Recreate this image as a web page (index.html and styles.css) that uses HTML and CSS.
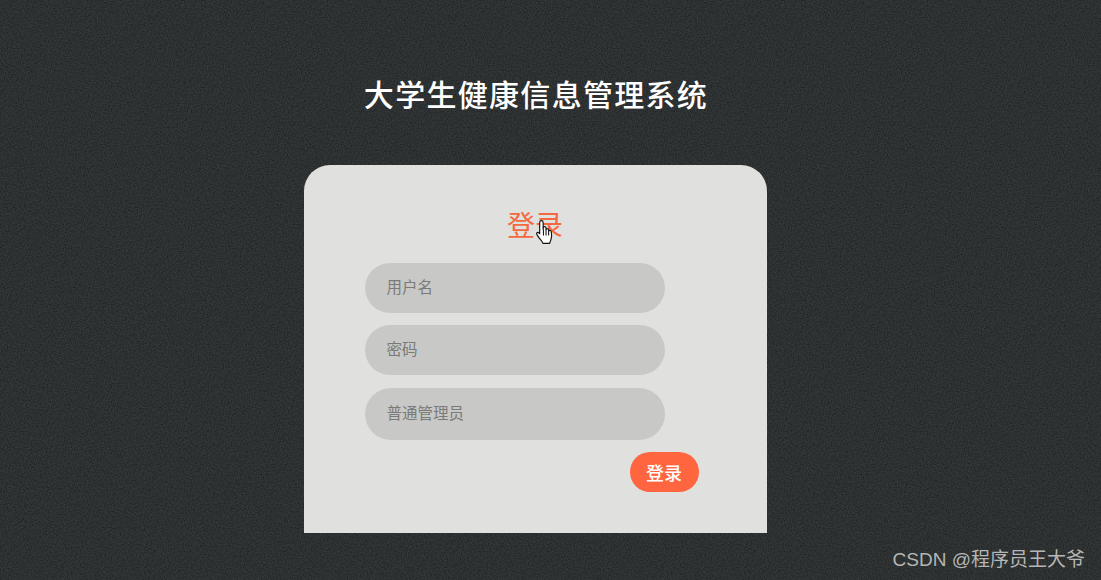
FILE: index.html
```html
<!DOCTYPE html>
<html lang="zh-CN">
<head>
    <meta charset="UTF-8">
    <title>大学生健康信息管理系统</title>
    <link rel="stylesheet" href="styles.css">
</head>
<body>
    <h1 class="title">大学生健康信息管理系统</h1>
    <form class="login-card">
        <div class="heading-wrap">
            <h2 class="login-heading">登录</h2>
            <svg class="hand-cursor" width="20" height="27" viewBox="0 0 19 26">
                <path d="M6 1.500c1 0 1.700.7 1.700 1.800V10l.3-2.200c1-.8 2.200-.5 2.500.7v1.500c.6-1 2.100-.8 2.500.3v1.200c.8-.8 2.300-.5 2.600.8.400 2 .3 5-.3 7.200-.4 1.500-1 2.500-1.300 4H7.500c-.5-1.500-1.200-2.500-2.300-3.700C4 18.500 2.700 16.800 1.600 14.800c-.6-1.200.6-2.400 1.800-1.600l1 1V3.300C4.400 2.200 5 1.500 6 1.500z" fill="#fff" stroke="#111" stroke-width="1.100" stroke-linejoin="round"/>
                <path d="M8 10v6M10.500 10v6M13 11.500V16" stroke="#111" stroke-width="1" fill="none"/>
            </svg>
        </div>
        <input class="field" type="text" placeholder="用户名">
        <input class="field" type="password" placeholder="密码">
        <input class="field field-tall" type="text" placeholder="普通管理员">
        <div class="actions">
            <button class="login-btn" type="button">登录</button>
        </div>
    </form>
    <div class="watermark">CSDN @程序员王大爷</div>
</body>
</html>
```

FILE: styles.css
```css
* {
    box-sizing: border-box;
}
html, body {
    height: 100%;
}
body {
    margin: 0;
    padding-right: 31px;
    overflow: hidden;
    display: flex;
    flex-direction: column;
    align-items: center;
    font-family: "Liberation Sans", "Noto Sans CJK SC", sans-serif;
    background-color: #343838;
    background-image: url("data:image/svg+xml,%3Csvg xmlns='http://www.w3.org/2000/svg' width='300' height='300'%3E%3Cfilter id='n'%3E%3CfeTurbulence type='fractalNoise' baseFrequency='0.7' numOctaves='3' stitchTiles='stitch'/%3E%3CfeColorMatrix values='0 0 0 0 0 0 0 0 0 0 0 0 0 0 0 0.7 0 0 0 -0.22'/%3E%3C/filter%3E%3Crect width='300' height='300' filter='url(%23n)'/%3E%3C/svg%3E");
}
.title {
    margin: 77px 0 0 2px;
    height: 88px;
    line-height: 38px;
    font-size: 30px;
    font-weight: 500;
    letter-spacing: 1.3px;
    color: #fff;
    font-family: "Liberation Serif", "Noto Sans CJK SC", serif;
}
.login-card {
    width: 463px;
    height: 368px;
    padding: 40px 68px 0 61px;
    background: #e0e0de;
    border-radius: 26px 26px 0 0;
    display: flex;
    flex-direction: column;
    gap: 12px;
}
.heading-wrap {
    position: relative;
    height: 46px;
    width: 343px;
    margin-left: -1px;
}
.login-heading {
    margin: 1px 0 0;
    text-align: center;
    font-size: 28px;
    line-height: 42px;
    font-weight: 400;
    color: #f4683f;
}
.hand-cursor {
    position: absolute;
    left: 171px;
    top: 14px;
}
.field {
    display: block;
    width: 300px;
    height: 50px;
    flex: none;
    border: none;
    outline: none;
    padding: 0 22px;
    border-radius: 25px;
    background: #c8c8c6;
    font-family: inherit;
    font-size: 15.5px;
}
.field::placeholder {
    color: #7a7a78;
}
.field-tall {
    height: 52px;
    margin-top: 1px;
    border-radius: 26px;
}
.actions {
    display: flex;
    justify-content: flex-end;
}
.login-btn {
    width: 69px;
    height: 40px;
    border: none;
    border-radius: 20px;
    background: #ff6640;
    color: #fff;
    font-family: inherit;
    font-size: 18px;
    font-weight: 500;
    cursor: pointer;
}
.watermark {
    position: absolute;
    right: 16px;
    bottom: 8px;
    font-size: 19px;
    line-height: 24px;
    color: #b4b6b5;
}
```
